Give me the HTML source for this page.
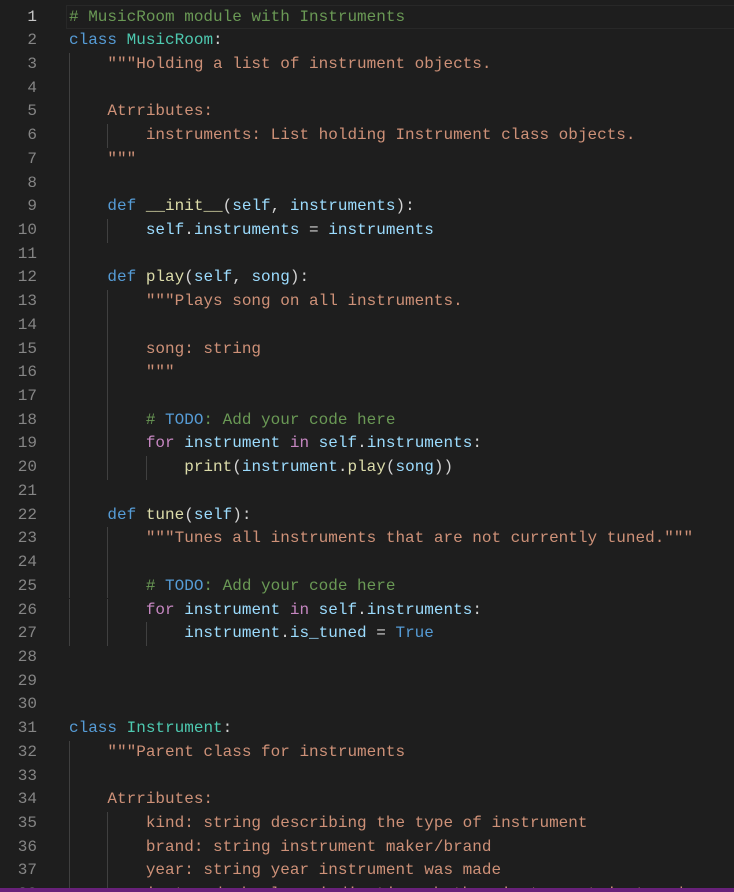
<!DOCTYPE html>
<html><head><meta charset="utf-8"><style>
html,body{margin:0;padding:0;background:#1e1e1e;width:734px;height:892px;overflow:hidden}
body{position:relative;font-family:"Liberation Mono",monospace;font-size:16px}
.ln{position:absolute;left:0;width:37px;text-align:right;color:#858585;height:23.72px;line-height:23.72px}
.ln.a{color:#c6c6c6}
.l{position:absolute;left:69px;height:23.72px;line-height:23.72px;white-space:pre;color:#d4d4d4}
.g{position:absolute;width:1px;background:#404040;height:23.72px}
.k{color:#569cd6}.c{color:#6a9955}.t{color:#4ec9b0}.s{color:#ce9178}.v{color:#9cdcfe}.f{color:#dcdcaa}.p{color:#c586c0}
.hl{position:absolute;left:66px;top:5px;width:680px;height:22px;border:1px solid #282828}
.sb{position:absolute;left:0;top:888px;width:734px;height:4px;background:#68217a}
</style></head><body>
<div class="hl"></div>
<div id="c"></div>
<div class="sb"></div>
<script>
var L=[
['<span class="c"># MusicRoom module with Instruments</span>',[]],
['<span class="k">class</span> <span class="t">MusicRoom</span>:',[]],
['    <span class="s">"""Holding a list of instrument objects.</span>',[0]],
['',[0]],
['    <span class="s">Atrributes:</span>',[0]],
['        <span class="s">instruments: List holding Instrument class objects.</span>',[0,1]],
['    <span class="s">"""</span>',[0]],
['',[0]],
['    <span class="k">def</span> <span class="f">__init__</span>(<span class="v">self</span>, <span class="v">instruments</span>):',[0]],
['        <span class="v">self</span>.<span class="v">instruments</span> = <span class="v">instruments</span>',[0,1]],
['',[0]],
['    <span class="k">def</span> <span class="f">play</span>(<span class="v">self</span>, <span class="v">song</span>):',[0]],
['        <span class="s">"""Plays song on all instruments.</span>',[0,1]],
['',[0,1]],
['        <span class="s">song: string</span>',[0,1]],
['        <span class="s">"""</span>',[0,1]],
['',[0,1]],
['        <span class="c"># </span><span class="k">TODO</span><span class="c">: Add your code here</span>',[0,1]],
['        <span class="p">for</span> <span class="v">instrument</span> <span class="p">in</span> <span class="v">self</span>.<span class="v">instruments</span>:',[0,1]],
['            <span class="f">print</span>(<span class="v">instrument</span>.<span class="f">play</span>(<span class="v">song</span>))',[0,1,2]],
['',[0]],
['    <span class="k">def</span> <span class="f">tune</span>(<span class="v">self</span>):',[0]],
['        <span class="s">"""Tunes all instruments that are not currently tuned."""</span>',[0,1]],
['',[0,1]],
['        <span class="c"># </span><span class="k">TODO</span><span class="c">: Add your code here</span>',[0,1]],
['        <span class="p">for</span> <span class="v">instrument</span> <span class="p">in</span> <span class="v">self</span>.<span class="v">instruments</span>:',[0,1]],
['            <span class="v">instrument</span>.<span class="v">is_tuned</span> = <span class="k">True</span>',[0,1,2]],
['',[]],['',[]],['',[]],
['<span class="k">class</span> <span class="t">Instrument</span>:',[]],
['    <span class="s">"""Parent class for instruments</span>',[0]],
['',[0]],
['    <span class="s">Atrributes:</span>',[0]],
['        <span class="s">kind: string describing the type of instrument</span>',[0,1]],
['        <span class="s">brand: string instrument maker/brand</span>',[0,1]],
['        <span class="s">year: string year instrument was made</span>',[0,1]],
['        <span class="s">is_tuned: boolean indicating whether instrument is tuned</span>',[0,1]]
];
var h='',lh=23.72,top0=5.5;
L.forEach(function(r,i){var y=(top0+i*lh).toFixed(2);
h+='<div class="ln'+(i==0?' a':'')+'" style="top:'+y+'px">'+(i+1)+'</div>';
r[1].forEach(function(g){h+='<div class="g" style="top:'+y+'px;left:'+(69+g*38.4).toFixed(1)+'px"></div>';});
h+='<div class="l" style="top:'+y+'px">'+r[0]+'</div>';});
document.getElementById('c').innerHTML=h;
</script>
</body></html>
